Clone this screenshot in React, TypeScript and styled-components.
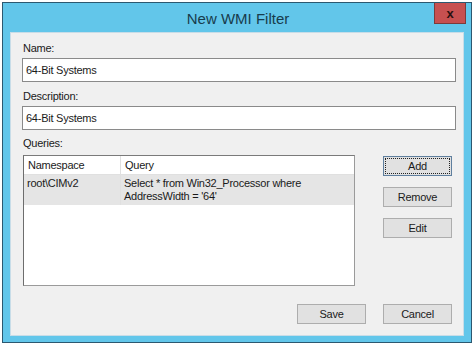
import React from "react";
import styled, { createGlobalStyle } from "styled-components";

const Global = createGlobalStyle`
  html, body {
    margin: 0;
    padding: 0;
    background: #ffffff;
  }
  body {
    font-family: "Liberation Sans", Arial, sans-serif;
    font-size: 11px;
    letter-spacing: -0.25px;
    color: #1a1a1a;
  }
`;

const Page = styled.div`
  width: 474px;
  height: 347px;
  padding: 2px 0 0 2px;
  box-sizing: border-box;
`;

const Window = styled.div`
  width: 470px;
  height: 341px;
  box-sizing: border-box;
  border: 1px solid #2c5870;
  background: #62c6ea;
  display: flex;
  flex-direction: column;
  padding: 0 7px 6px 7px;
`;

const TitleBar = styled.div`
  height: 29px;
  display: grid;
  grid-template-columns: 1fr auto 1fr;
  align-items: center;
  margin: 0 -2px 0 0;
`;

const Title = styled.div`
  grid-column: 2;
  font-family: "Liberation Sans", Arial, sans-serif;
  font-size: 15px;
  letter-spacing: 0;
  color: #183c4c;
  padding-top: 1px;
`;

const CloseButton = styled.div`
  grid-column: 3;
  justify-self: end;
  align-self: start;
  width: 32px;
  height: 21px;
  box-sizing: border-box;
  background: #c75050;
  border: 1px solid #7d3a3a;
  border-top: none;
  display: flex;
  align-items: center;
  justify-content: center;
  color: #2a1010;
  font-weight: bold;
  font-size: 13px;
  letter-spacing: 0;
  line-height: 1;
`;

const Body = styled.div`
  flex: 1;
  background: #f0f0f0;
  border: 1px solid #c8dde8;
  box-sizing: border-box;
  padding: 8px 7px 0 11px;
  display: flex;
  flex-direction: column;
`;

const Label = styled.div<{ $gap?: number }>`
  margin-top: ${(p) => p.$gap ?? 0}px;
  padding-left: 1px;
  line-height: 15px;
  height: 15px;
  color: #1a1a1a;
`;

const Field = styled.div`
  margin-top: 2px;
  height: 24px;
  box-sizing: border-box;
  border: 1px solid #8a8a8a;
  background: #ffffff;
  padding: 0 4px 0 3px;
  display: flex;
  align-items: center;
  line-height: 15px;
`;

const QueriesRow = styled.div`
  margin-top: 4px;
  display: flex;
  gap: 28px;
`;

const Table = styled.div`
  width: 332px;
  height: 131px;
  box-sizing: border-box;
  border: 1px solid #9a9a9a;
  border-left-color: #6d6d6d;
  border-top-color: #7a7a7a;
  background: #ffffff;
  margin-left: 1px;
`;

const Row = styled.div<{ $header?: boolean }>`
  display: grid;
  grid-template-columns: 97px 1fr;
  background: ${(p) => (p.$header ? "#ffffff" : "#e5e5e5")};
  height: ${(p) => (p.$header ? 18 : 30)}px;
  border-bottom: ${(p) => (p.$header ? "1px solid #e0e0e0" : "none")};
  line-height: 13px;
`;

const Cell = styled.div<{ $header?: boolean; $sep?: boolean }>`
  padding: ${(p) => (p.$header ? "3px 4px 0 4px" : "2px 4px 0 3px")};
  border-right: ${(p) => (p.$sep ? "1px solid #e0e0e0" : "none")};
  color: #1a1a1a;
  white-space: nowrap;
`;

const ButtonColumn = styled.div`
  display: flex;
  flex-direction: column;
  gap: 11px;
  padding-top: 1px;
`;

const Button = styled.div<{ $default?: boolean }>`
  width: 69px;
  height: 20px;
  box-sizing: border-box;
  border: 1px solid ${(p) => (p.$default ? "#5f7f9e" : "#adadad")};
  background: #e1e1e1;
  display: flex;
  align-items: center;
  justify-content: center;
  color: #1a1a1a;
  outline: ${(p) => (p.$default ? "1px dotted #222" : "none")};
  outline-offset: -3px;
`;

const Footer = styled.div`
  margin-top: auto;
  margin-bottom: 11px;
  margin-right: 4px;
  display: flex;
  justify-content: flex-end;
  gap: 17px;
`;

export default function App() {
  return (
    <>
      <Global />
      <Page>
        <Window>
          <TitleBar>
            <Title>New WMI Filter</Title>
            <CloseButton>x</CloseButton>
          </TitleBar>
          <Body>
            <Label>Name:</Label>
            <Field>64-Bit Systems</Field>
            <Label $gap={7}>Description:</Label>
            <Field>64-Bit Systems</Field>
            <Label $gap={6}>Queries:</Label>
            <QueriesRow>
              <Table>
                <Row $header>
                  <Cell $header $sep>Namespace</Cell>
                  <Cell $header>Query</Cell>
                </Row>
                <Row>
                  <Cell $sep>root\CIMv2</Cell>
                  <Cell>
                    Select * from Win32_Processor where
                    <br />
                    AddressWidth = '64'
                  </Cell>
                </Row>
              </Table>
              <ButtonColumn>
                <Button $default>Add</Button>
                <Button>Remove</Button>
                <Button>Edit</Button>
              </ButtonColumn>
            </QueriesRow>
            <Footer>
              <Button>Save</Button>
              <Button>Cancel</Button>
            </Footer>
          </Body>
        </Window>
      </Page>
    </>
  );
}
